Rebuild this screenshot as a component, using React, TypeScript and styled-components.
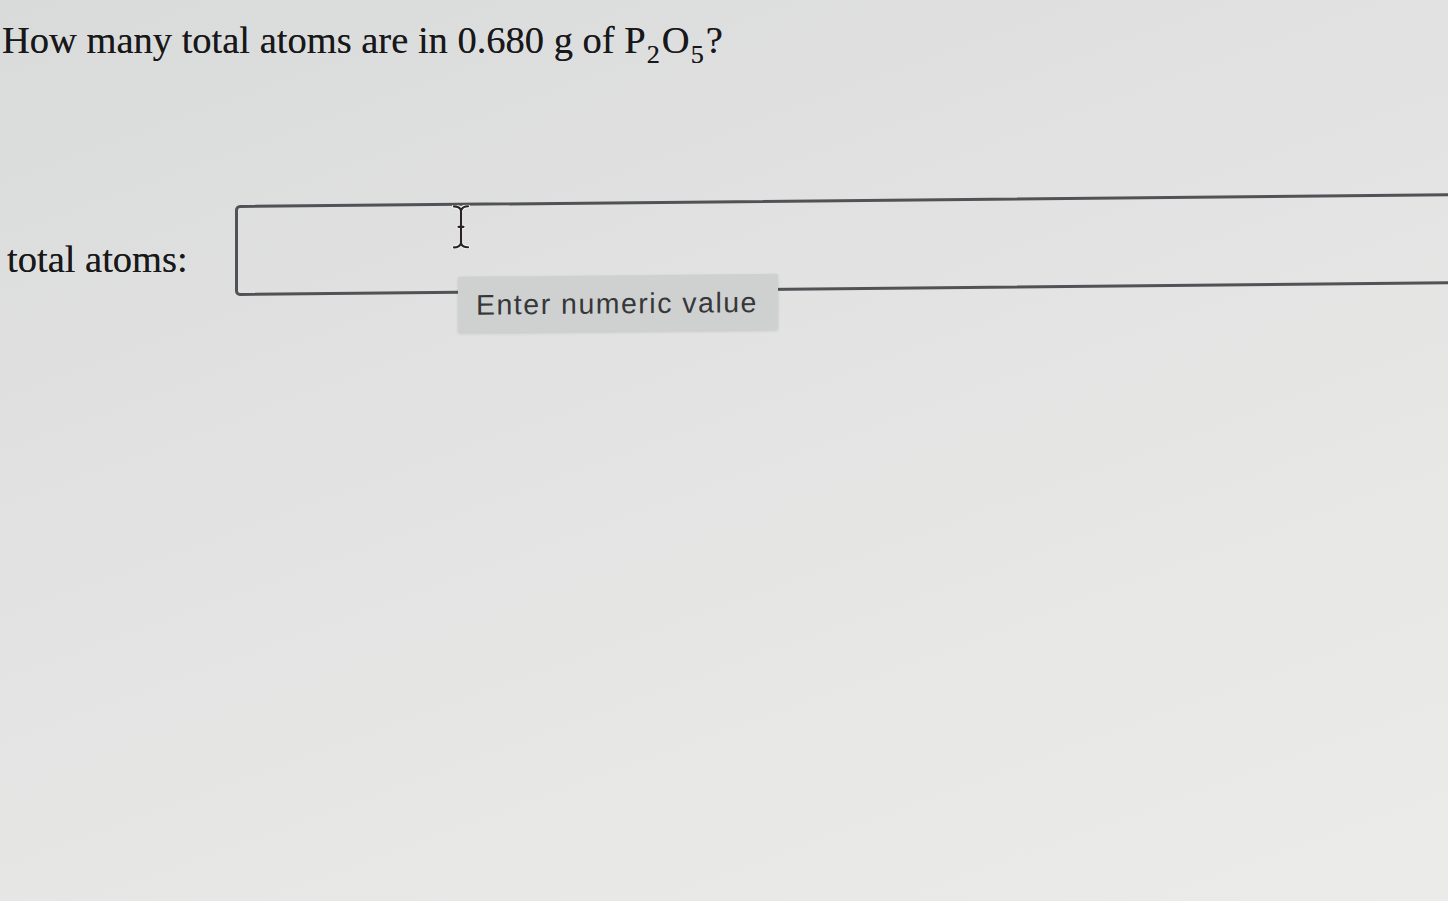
import type {FC} from 'react';
import styled, {createGlobalStyle} from 'styled-components';

const GlobalStyle = createGlobalStyle`
    html, body {
        margin: 0;
        padding: 0;
        overflow: hidden;
    }
    body {
        width: 1448px;
        height: 901px;
        background: linear-gradient(160deg, #d9dbda 0%, #e1e2e1 40%, #e8e8e7 75%, #ebebea 100%);
        font-family: "Liberation Serif", "Times New Roman", serif;
        color: #1d1d1f;
    }
`;

const beam = 'M2 1.5C6 1.5 8 3 9 5.5C10 3 12 1.5 16 1.5M9 5.5V38.5M6.5 22H11.5M2 42.5C6 42.5 8 41 9 38.5C10 41 12 42.5 16 42.5';

const Cursor: FC = () => <CursorSvg width="18" height="44" viewBox="0 0 18 44" aria-hidden="true">
    <path d={beam} fill="none" stroke="#f4f4f4" strokeWidth="4" strokeLinecap="round"/>
    <path d={beam} fill="none" stroke="#2a2326" strokeWidth="2.2" strokeLinecap="round"/>
</CursorSvg>;

export default function App() {
    return <>
        <GlobalStyle/>
        <Page>
            <Question>
                How many total atoms are in 0.680 g of P<Sub>2</Sub>O<Sub>5</Sub>?
            </Question>
            <AnswerRow>
                <Label htmlFor="atoms">total atoms:</Label>
                <InputWrap>
                    <NumberInput id="atoms" type="text"/>
                    <Cursor/>
                    <Tooltip>Enter numeric value</Tooltip>
                </InputWrap>
            </AnswerRow>
        </Page>
    </>;
}

const Page = styled.main`
    display: flex;
    flex-direction: column;
`;

const Question = styled.h1`
    margin: 0;
    padding: 18px 0 0 2px;
    font-size: 38.5px;
    font-weight: 400;
    line-height: 44px;
    white-space: nowrap;
    color: #18181a;
    text-shadow: 0 0 0.5px rgba(0, 0, 0, 0.6);
`;

const Sub = styled.sub`
    font-size: 0.68em;
    line-height: 0;
    vertical-align: -0.4em;
    margin: 0 2px 0 1px;
`;

const AnswerRow = styled.div`
    display: flex;
    align-items: flex-start;
    margin-top: 143px;
`;

const Label = styled.label`
    flex: 0 0 228px;
    padding: 32px 0 0 7px;
    font-size: 38.5px;
    line-height: 44px;
    color: #18181a;
    text-shadow: 0 0 0.5px rgba(0, 0, 0, 0.6);
`;

const InputWrap = styled.div`
    position: relative;
    flex: 0 0 1300px;
    transform: skewY(-0.55deg);
    transform-origin: left top;
`;

const NumberInput = styled.input`
    box-sizing: border-box;
    display: block;
    width: 100%;
    height: 91px;
    margin: 0;
    padding: 0 16px;
    border: 3px solid #505255;
    border-radius: 5px;
    background: transparent;
    font: 400 30px "Liberation Sans", Arial, sans-serif;
    outline: none;
`;

const CursorSvg = styled.svg`
    position: absolute;
    left: 217px;
    top: 2px;
`;

const Tooltip = styled.div`
    position: absolute;
    left: 223px;
    top: 74px;
    box-sizing: border-box;
    width: 320px;
    height: 56px;
    display: flex;
    align-items: center;
    padding-left: 18px;
    background: #cfd1d0;
    border-radius: 2px;
    box-shadow: 0 1px 3px rgba(0, 0, 0, 0.12);
    font-family: "Liberation Sans", Arial, sans-serif;
    font-size: 28.5px;
    letter-spacing: 1.5px;
    color: #36373a;
    white-space: nowrap;
`;
